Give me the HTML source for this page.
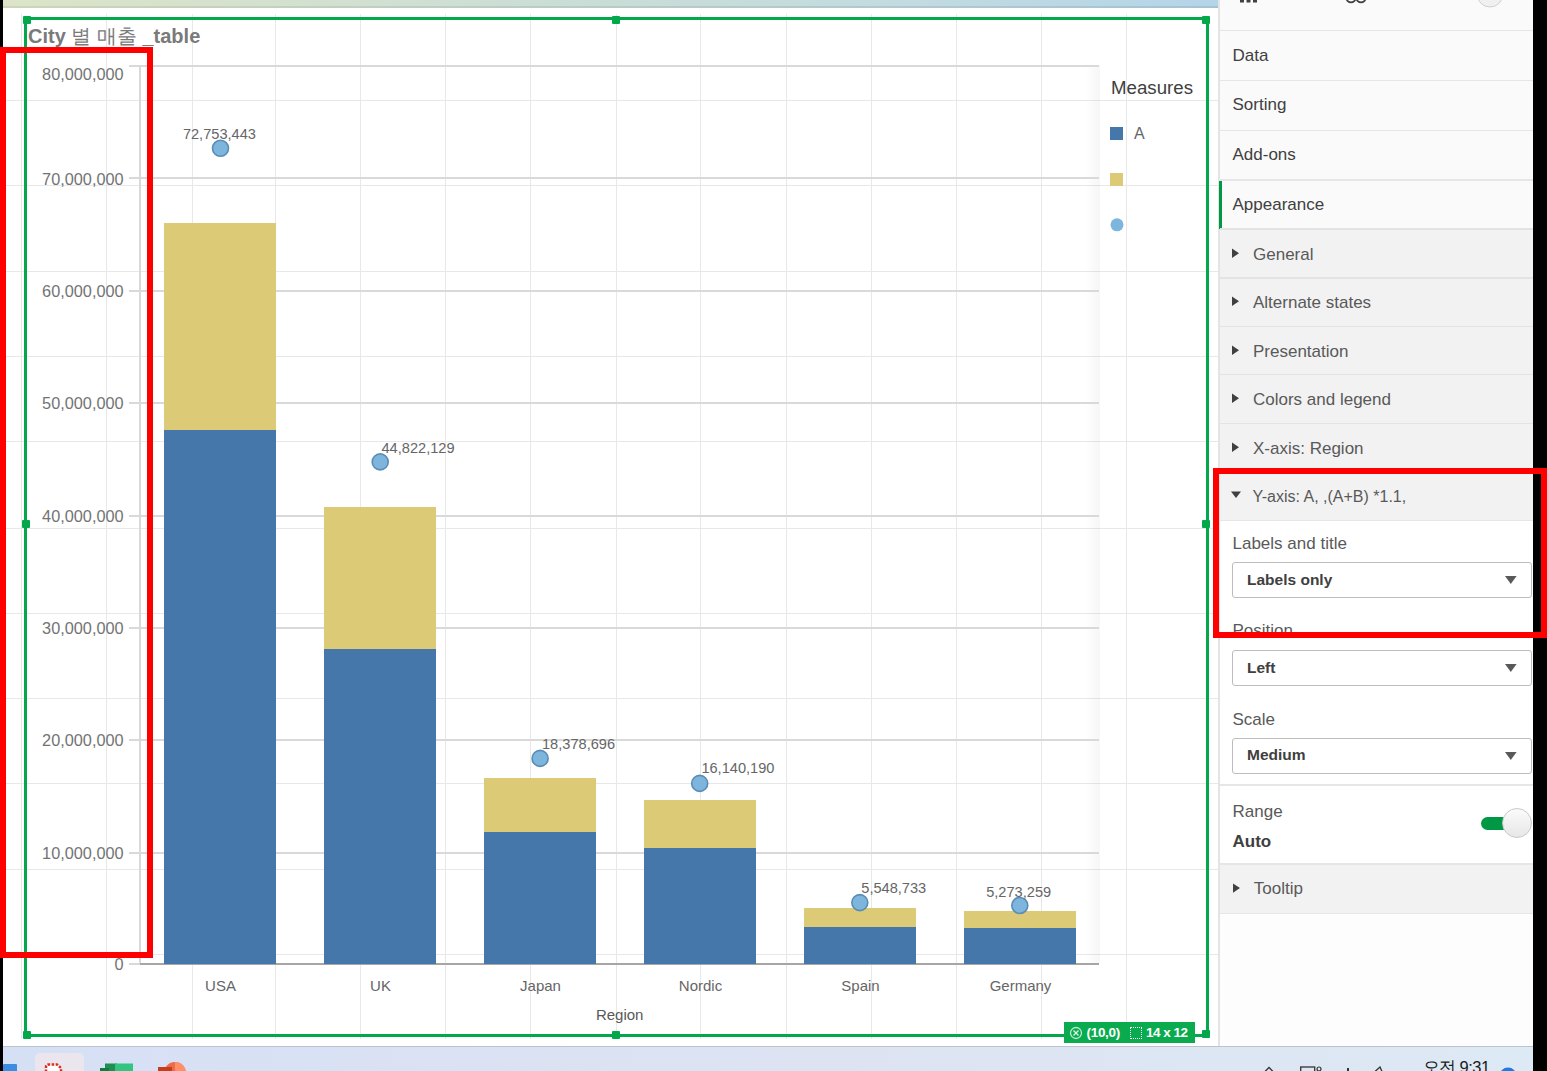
<!DOCTYPE html>
<html><head><meta charset="utf-8"><title>Qlik chart</title>
<style>
html,body{margin:0;padding:0;}
body{width:1547px;height:1071px;position:relative;overflow:hidden;background:#ffffff;font-family:'Liberation Sans',sans-serif;}
.r{position:absolute;box-sizing:content-box;}
.t{position:absolute;white-space:nowrap;line-height:0;font-family:'Liberation Sans',sans-serif;}
</style></head><body>
<div class="r" style="left:21.00px;top:14.00px;width:1.00px;height:1025.00px;background:#e8e8e8;"></div>
<div class="r" style="left:106.00px;top:14.00px;width:1.00px;height:1025.00px;background:#e8e8e8;"></div>
<div class="r" style="left:192.00px;top:14.00px;width:1.00px;height:1025.00px;background:#e8e8e8;"></div>
<div class="r" style="left:275.00px;top:14.00px;width:1.00px;height:1025.00px;background:#e8e8e8;"></div>
<div class="r" style="left:360.00px;top:14.00px;width:1.00px;height:1025.00px;background:#e8e8e8;"></div>
<div class="r" style="left:445.00px;top:14.00px;width:1.00px;height:1025.00px;background:#e8e8e8;"></div>
<div class="r" style="left:530.00px;top:14.00px;width:1.00px;height:1025.00px;background:#e8e8e8;"></div>
<div class="r" style="left:616.00px;top:14.00px;width:1.00px;height:1025.00px;background:#e8e8e8;"></div>
<div class="r" style="left:700.00px;top:14.00px;width:1.00px;height:1025.00px;background:#e8e8e8;"></div>
<div class="r" style="left:786.00px;top:14.00px;width:1.00px;height:1025.00px;background:#e8e8e8;"></div>
<div class="r" style="left:871.00px;top:14.00px;width:1.00px;height:1025.00px;background:#e8e8e8;"></div>
<div class="r" style="left:956.00px;top:14.00px;width:1.00px;height:1025.00px;background:#e8e8e8;"></div>
<div class="r" style="left:1041.00px;top:14.00px;width:1.00px;height:1025.00px;background:#e8e8e8;"></div>
<div class="r" style="left:1126.00px;top:14.00px;width:1.00px;height:1025.00px;background:#e8e8e8;"></div>
<div class="r" style="left:3.00px;top:100.00px;width:1215.00px;height:1.00px;background:#e8e8e8;"></div>
<div class="r" style="left:3.00px;top:185.00px;width:1215.00px;height:1.00px;background:#e8e8e8;"></div>
<div class="r" style="left:3.00px;top:271.00px;width:1215.00px;height:1.00px;background:#e8e8e8;"></div>
<div class="r" style="left:3.00px;top:356.00px;width:1215.00px;height:1.00px;background:#e8e8e8;"></div>
<div class="r" style="left:3.00px;top:441.00px;width:1215.00px;height:1.00px;background:#e8e8e8;"></div>
<div class="r" style="left:3.00px;top:528.00px;width:1215.00px;height:1.00px;background:#e8e8e8;"></div>
<div class="r" style="left:3.00px;top:613.00px;width:1215.00px;height:1.00px;background:#e8e8e8;"></div>
<div class="r" style="left:3.00px;top:698.00px;width:1215.00px;height:1.00px;background:#e8e8e8;"></div>
<div class="r" style="left:3.00px;top:783.00px;width:1215.00px;height:1.00px;background:#e8e8e8;"></div>
<div class="r" style="left:3.00px;top:869.00px;width:1215.00px;height:1.00px;background:#e8e8e8;"></div>
<div class="r" style="left:3.00px;top:954.00px;width:1215.00px;height:1.00px;background:#e8e8e8;"></div>
<div class="r" style="left:1085.00px;top:66.00px;width:15.00px;height:898.00px;background:linear-gradient(to right, rgba(0,0,0,0), rgba(0,0,0,0.035));"></div>
<div class="r" style="left:3px;top:0;width:1215px;height:6px;background:linear-gradient(to right,#dce4c8 0%,#c9ddd7 50%,#c3dbe0 74%,#b4d4e8 100%)"></div>
<div class="r" style="left:3px;top:6px;width:1215px;height:1.5px;background:linear-gradient(to right,#cbd5b8 0%,#b7cbc6 50%,#b0c9cf 74%,#a6c2d6 100%)"></div>
<div class="r" style="left:129.00px;top:65.10px;width:970.00px;height:2.00px;background:#d9d9d9;"></div>
<div class="r" style="left:129.00px;top:177.47px;width:970.00px;height:2.00px;background:#d9d9d9;"></div>
<div class="r" style="left:129.00px;top:289.84px;width:970.00px;height:2.00px;background:#d9d9d9;"></div>
<div class="r" style="left:129.00px;top:402.21px;width:970.00px;height:2.00px;background:#d9d9d9;"></div>
<div class="r" style="left:129.00px;top:514.58px;width:970.00px;height:2.00px;background:#d9d9d9;"></div>
<div class="r" style="left:129.00px;top:626.95px;width:970.00px;height:2.00px;background:#d9d9d9;"></div>
<div class="r" style="left:129.00px;top:739.32px;width:970.00px;height:2.00px;background:#d9d9d9;"></div>
<div class="r" style="left:129.00px;top:851.69px;width:970.00px;height:2.00px;background:#d9d9d9;"></div>
<div class="r" style="left:139.25px;top:66.00px;width:1.50px;height:898.00px;background:#d9d9d9;"></div>
<div class="r" style="left:129.00px;top:963.25px;width:11.00px;height:1.50px;background:#d9d9d9;"></div>
<div class="r" style="left:140.00px;top:963.25px;width:959.00px;height:1.50px;background:#a6a6a6;"></div>
<div class="t" style="right:1423.40px;top:74.05px;font-size:16.3px;color:#737373;font-weight:normal;font-family:'Liberation Sans', sans-serif;">80,000,000</div>
<div class="t" style="right:1423.40px;top:178.62px;font-size:16.3px;color:#737373;font-weight:normal;font-family:'Liberation Sans', sans-serif;">70,000,000</div>
<div class="t" style="right:1423.40px;top:290.99px;font-size:16.3px;color:#737373;font-weight:normal;font-family:'Liberation Sans', sans-serif;">60,000,000</div>
<div class="t" style="right:1423.40px;top:403.36px;font-size:16.3px;color:#737373;font-weight:normal;font-family:'Liberation Sans', sans-serif;">50,000,000</div>
<div class="t" style="right:1423.40px;top:515.73px;font-size:16.3px;color:#737373;font-weight:normal;font-family:'Liberation Sans', sans-serif;">40,000,000</div>
<div class="t" style="right:1423.40px;top:628.10px;font-size:16.3px;color:#737373;font-weight:normal;font-family:'Liberation Sans', sans-serif;">30,000,000</div>
<div class="t" style="right:1423.40px;top:740.47px;font-size:16.3px;color:#737373;font-weight:normal;font-family:'Liberation Sans', sans-serif;">20,000,000</div>
<div class="t" style="right:1423.40px;top:852.84px;font-size:16.3px;color:#737373;font-weight:normal;font-family:'Liberation Sans', sans-serif;">10,000,000</div>
<div class="t" style="right:1423.40px;top:964.35px;font-size:16.3px;color:#737373;font-weight:normal;font-family:'Liberation Sans', sans-serif;">0</div>
<div class="r" style="left:164.00px;top:222.50px;width:112.00px;height:207.00px;background:#dcca77;"></div>
<div class="r" style="left:164.00px;top:429.50px;width:112.00px;height:534.90px;background:#4577aa;"></div>
<div class="r" style="left:324.00px;top:507.40px;width:112.00px;height:141.60px;background:#dcca77;"></div>
<div class="r" style="left:324.00px;top:649.00px;width:112.00px;height:315.40px;background:#4577aa;"></div>
<div class="r" style="left:484.00px;top:777.60px;width:112.00px;height:54.50px;background:#dcca77;"></div>
<div class="r" style="left:484.00px;top:832.10px;width:112.00px;height:132.30px;background:#4577aa;"></div>
<div class="r" style="left:644.00px;top:800.40px;width:112.00px;height:48.00px;background:#dcca77;"></div>
<div class="r" style="left:644.00px;top:848.40px;width:112.00px;height:116.00px;background:#4577aa;"></div>
<div class="r" style="left:804.00px;top:908.40px;width:112.00px;height:18.20px;background:#dcca77;"></div>
<div class="r" style="left:804.00px;top:926.60px;width:112.00px;height:37.80px;background:#4577aa;"></div>
<div class="r" style="left:964.00px;top:911.10px;width:112.00px;height:16.70px;background:#dcca77;"></div>
<div class="r" style="left:964.00px;top:927.80px;width:112.00px;height:36.60px;background:#4577aa;"></div>
<div class="t" style="left:-79.50px;width:600px;text-align:center;top:986.10px;font-size:15px;color:#666666;font-weight:normal;font-family:'Liberation Sans', sans-serif;">USA</div>
<div class="t" style="left:80.50px;width:600px;text-align:center;top:986.10px;font-size:15px;color:#666666;font-weight:normal;font-family:'Liberation Sans', sans-serif;">UK</div>
<div class="t" style="left:240.50px;width:600px;text-align:center;top:986.10px;font-size:15px;color:#666666;font-weight:normal;font-family:'Liberation Sans', sans-serif;">Japan</div>
<div class="t" style="left:400.50px;width:600px;text-align:center;top:986.10px;font-size:15px;color:#666666;font-weight:normal;font-family:'Liberation Sans', sans-serif;">Nordic</div>
<div class="t" style="left:560.50px;width:600px;text-align:center;top:986.10px;font-size:15px;color:#666666;font-weight:normal;font-family:'Liberation Sans', sans-serif;">Spain</div>
<div class="t" style="left:720.50px;width:600px;text-align:center;top:986.10px;font-size:15px;color:#666666;font-weight:normal;font-family:'Liberation Sans', sans-serif;">Germany</div>
<div class="t" style="left:319.70px;width:600px;text-align:center;top:1014.80px;font-size:15px;color:#595959;font-weight:normal;font-family:'Liberation Sans', sans-serif;">Region</div>
<svg class="r" style="left:0;top:0" width="1547" height="1071"><circle cx="220.5" cy="148.3" r="8" fill="#7db5dc" stroke="#5a8cb5" stroke-width="1.6"/><circle cx="380.2" cy="461.9" r="8" fill="#7db5dc" stroke="#5a8cb5" stroke-width="1.6"/><circle cx="540.1" cy="758.4" r="8" fill="#7db5dc" stroke="#5a8cb5" stroke-width="1.6"/><circle cx="699.7" cy="783.4" r="8" fill="#7db5dc" stroke="#5a8cb5" stroke-width="1.6"/><circle cx="859.8" cy="902.6" r="8" fill="#7db5dc" stroke="#5a8cb5" stroke-width="1.6"/><circle cx="1019.8" cy="905.5" r="8" fill="#7db5dc" stroke="#5a8cb5" stroke-width="1.6"/></svg>
<div class="t" style="left:182.90px;top:133.74px;font-size:14.6px;color:#666666;font-weight:normal;font-family:'Liberation Sans', sans-serif;">72,753,443</div>
<div class="t" style="left:381.50px;top:448.04px;font-size:14.6px;color:#666666;font-weight:normal;font-family:'Liberation Sans', sans-serif;">44,822,129</div>
<div class="t" style="left:542.00px;top:743.64px;font-size:14.6px;color:#666666;font-weight:normal;font-family:'Liberation Sans', sans-serif;">18,378,696</div>
<div class="t" style="left:701.40px;top:768.24px;font-size:14.6px;color:#666666;font-weight:normal;font-family:'Liberation Sans', sans-serif;">16,140,190</div>
<div class="t" style="left:861.30px;top:887.84px;font-size:14.6px;color:#666666;font-weight:normal;font-family:'Liberation Sans', sans-serif;">5,548,733</div>
<div class="t" style="left:986.20px;top:891.54px;font-size:14.6px;color:#666666;font-weight:normal;font-family:'Liberation Sans', sans-serif;">5,273,259</div>
<div class="t" style="left:1111.00px;top:87.82px;font-size:18.7px;color:#404040;font-weight:normal;font-family:'Liberation Sans', sans-serif;">Measures</div>
<div class="r" style="left:1110.30px;top:126.50px;width:13.00px;height:13.00px;background:#4577aa;"></div>
<div class="t" style="left:1134.00px;top:134.46px;font-size:16px;color:#666666;font-weight:normal;font-family:'Liberation Sans', sans-serif;">A</div>
<div class="r" style="left:1110.30px;top:172.50px;width:13.00px;height:13.00px;background:#dcca77;"></div>
<svg class="r" style="left:1108px;top:216px" width="18" height="18"><circle cx="9" cy="8.8" r="6.5" fill="#7db5dc"/></svg>
<div class="t" style="left:28.00px;top:36.37px;font-size:20px;color:#7a7a7a;font-weight:bold;font-family:'Liberation Sans', sans-serif;">City <span style="font-weight:500">별 매출</span> _table</div>
<div class="r" style="left:24.00px;top:17.00px;width:1184.50px;height:3.00px;background:#03a84a;"></div>
<div class="r" style="left:24.00px;top:1034.00px;width:1184.50px;height:3.00px;background:#03a84a;"></div>
<div class="r" style="left:24.00px;top:17.00px;width:3.00px;height:1020.00px;background:#03a84a;"></div>
<div class="r" style="left:1205.50px;top:17.00px;width:3.00px;height:1020.00px;background:#03a84a;"></div>
<div class="r" style="left:22.50px;top:15.70px;width:8.00px;height:8.00px;background:#03a84a;border-radius:1px"></div>
<div class="r" style="left:611.50px;top:15.50px;width:8.00px;height:8.00px;background:#03a84a;border-radius:1px"></div>
<div class="r" style="left:1202.00px;top:16.00px;width:8.00px;height:8.00px;background:#03a84a;border-radius:1px"></div>
<div class="r" style="left:22.40px;top:519.70px;width:8.00px;height:8.00px;background:#03a84a;border-radius:1px"></div>
<div class="r" style="left:1202.00px;top:519.70px;width:8.00px;height:8.00px;background:#03a84a;border-radius:1px"></div>
<div class="r" style="left:22.70px;top:1030.50px;width:8.00px;height:8.00px;background:#03a84a;border-radius:1px"></div>
<div class="r" style="left:611.50px;top:1030.50px;width:8.00px;height:8.00px;background:#03a84a;border-radius:1px"></div>
<div class="r" style="left:1202.00px;top:1030.30px;width:8.00px;height:8.00px;background:#03a84a;border-radius:1px"></div>
<div class="r" style="left:1064.30px;top:1022.40px;width:130.70px;height:20.70px;background:#0aab4f;"></div>
<svg class="r" style="left:1069px;top:1026px" width="15" height="15"><circle cx="7" cy="7" r="5.5" fill="none" stroke="#bfe8cc" stroke-width="1.3"/><path d="M4.5 4.5 L9.5 9.5 M9.5 4.5 L4.5 9.5" stroke="#dff5e6" stroke-width="1.3"/></svg>
<div class="t" style="left:1086.50px;top:1033.32px;font-size:13.5px;color:#ffffff;font-weight:bold;font-family:'Liberation Sans', sans-serif;letter-spacing:-0.3px">(10,0)</div>
<div class="r" style="left:1130px;top:1027px;width:10px;height:10px;border:1.5px dotted #ffffff"></div>
<div class="t" style="left:1146.00px;top:1033.32px;font-size:13.5px;color:#ffffff;font-weight:bold;font-family:'Liberation Sans', sans-serif;letter-spacing:-0.5px">14 x 12</div>
<div class="r" style="left:1218.00px;top:0.00px;width:315.00px;height:1046.00px;background:#fafafa;"></div>
<div class="r" style="left:1218.00px;top:0.00px;width:1.50px;height:1046.00px;background:#e4e4e4;"></div>
<svg class="r" style="left:1238.8px;top:0" width="20" height="4"><rect x="1" y="0" width="4" height="2.5" fill="#404040"/><rect x="7.5" y="0" width="4" height="2.5" fill="#404040"/><rect x="14" y="0" width="4" height="2.5" fill="#404040"/></svg>
<svg class="r" style="left:1345px;top:0" width="24" height="4"><ellipse cx="6" cy="-2" rx="4.5" ry="4.3" fill="none" stroke="#404040" stroke-width="1.8"/><ellipse cx="16" cy="-2" rx="4.5" ry="4.3" fill="none" stroke="#404040" stroke-width="1.8"/></svg>
<svg class="r" style="left:1470px;top:0" width="40" height="12"><circle cx="20" cy="-6" r="13" fill="#f0f0f0" stroke="#d0d0d0" stroke-width="1"/></svg>
<div class="r" style="left:1219.50px;top:29.85px;width:313.50px;height:1.50px;background:#e6e6e6;"></div>
<div class="r" style="left:1219.50px;top:79.75px;width:313.50px;height:1.50px;background:#e6e6e6;"></div>
<div class="r" style="left:1219.50px;top:129.55px;width:313.50px;height:1.50px;background:#e6e6e6;"></div>
<div class="r" style="left:1219.50px;top:179.25px;width:313.50px;height:1.50px;background:#e6e6e6;"></div>
<div class="t" style="left:1232.50px;top:55.86px;font-size:17px;color:#404040;font-weight:normal;font-family:'Liberation Sans', sans-serif;">Data</div>
<div class="t" style="left:1232.50px;top:105.41px;font-size:17px;color:#404040;font-weight:normal;font-family:'Liberation Sans', sans-serif;">Sorting</div>
<div class="t" style="left:1232.50px;top:155.01px;font-size:17px;color:#404040;font-weight:normal;font-family:'Liberation Sans', sans-serif;">Add-ons</div>
<div class="t" style="left:1232.50px;top:204.81px;font-size:17px;color:#404040;font-weight:normal;font-family:'Liberation Sans', sans-serif;">Appearance</div>
<div class="r" style="left:1219.00px;top:180.50px;width:2.50px;height:48.50px;background:#009845;"></div>
<div class="r" style="left:1219.50px;top:229.20px;width:313.50px;height:816.80px;background:#f2f2f2;"></div>
<div class="r" style="left:1219.50px;top:228.45px;width:313.50px;height:1.50px;background:#e3e3e3;"></div>
<div class="r" style="left:1219.50px;top:277.05px;width:313.50px;height:1.50px;background:#e3e3e3;"></div>
<div class="r" style="left:1219.50px;top:325.65px;width:313.50px;height:1.50px;background:#e3e3e3;"></div>
<div class="r" style="left:1219.50px;top:373.95px;width:313.50px;height:1.50px;background:#e3e3e3;"></div>
<div class="r" style="left:1219.50px;top:422.55px;width:313.50px;height:1.50px;background:#e3e3e3;"></div>
<div class="r" style="left:1219.50px;top:471.25px;width:313.50px;height:1.50px;background:#e3e3e3;"></div>
<div class="t" style="left:1253.00px;top:254.81px;font-size:17px;color:#595959;font-weight:normal;font-family:'Liberation Sans', sans-serif;">General</div>
<svg class="r" style="left:1232px;top:247.70px" width="8" height="11"><path d="M0 0.5 L7 5.2 L0 10 Z" fill="#404040"/></svg>
<div class="t" style="left:1253.00px;top:303.41px;font-size:17px;color:#595959;font-weight:normal;font-family:'Liberation Sans', sans-serif;">Alternate states</div>
<svg class="r" style="left:1232px;top:296.30px" width="8" height="11"><path d="M0 0.5 L7 5.2 L0 10 Z" fill="#404040"/></svg>
<div class="t" style="left:1253.00px;top:352.01px;font-size:17px;color:#595959;font-weight:normal;font-family:'Liberation Sans', sans-serif;">Presentation</div>
<svg class="r" style="left:1232px;top:344.90px" width="8" height="11"><path d="M0 0.5 L7 5.2 L0 10 Z" fill="#404040"/></svg>
<div class="t" style="left:1253.00px;top:400.31px;font-size:17px;color:#595959;font-weight:normal;font-family:'Liberation Sans', sans-serif;">Colors and legend</div>
<svg class="r" style="left:1232px;top:393.20px" width="8" height="11"><path d="M0 0.5 L7 5.2 L0 10 Z" fill="#404040"/></svg>
<div class="t" style="left:1253.00px;top:448.91px;font-size:17px;color:#595959;font-weight:normal;font-family:'Liberation Sans', sans-serif;">X-axis: Region</div>
<svg class="r" style="left:1232px;top:441.80px" width="8" height="11"><path d="M0 0.5 L7 5.2 L0 10 Z" fill="#404040"/></svg>
<div class="t" style="left:1252.50px;top:496.96px;font-size:16px;color:#595959;font-weight:normal;font-family:'Liberation Sans', sans-serif;">Y-axis: A, ,(A+B) *1.1,</div>
<svg class="r" style="left:1231px;top:491px" width="11" height="8"><path d="M0 0.5 L10 0.5 L5 7 Z" fill="#404040"/></svg>
<div class="r" style="left:1219.50px;top:520.70px;width:313.50px;height:343.00px;background:#ffffff;"></div>
<div class="r" style="left:1219.50px;top:519.50px;width:313.50px;height:1.50px;background:#e6e6e6;"></div>
<div class="t" style="left:1232.50px;top:543.71px;font-size:17px;color:#595959;font-weight:normal;font-family:'Liberation Sans', sans-serif;">Labels and title</div>
<div class="r" style="left:1232px;top:562px;width:297.5px;height:34px;border:1.5px solid #bdbdbd;border-radius:3px;background:#fff"></div>
<div class="t" style="left:1247.00px;top:579.83px;font-size:15.5px;color:#404040;font-weight:bold;font-family:'Liberation Sans', sans-serif;">Labels only</div>
<svg class="r" style="left:1505px;top:576px" width="12" height="9"><path d="M0 0 L11.6 0 L5.8 8 Z" fill="#595959"/></svg>
<div class="t" style="left:1232.50px;top:631.11px;font-size:17px;color:#595959;font-weight:normal;font-family:'Liberation Sans', sans-serif;">Position</div>
<div class="r" style="left:1232px;top:650px;width:297.5px;height:34px;border:1.5px solid #bdbdbd;border-radius:3px;background:#fff"></div>
<div class="t" style="left:1247.00px;top:667.83px;font-size:15.5px;color:#404040;font-weight:bold;font-family:'Liberation Sans', sans-serif;">Left</div>
<svg class="r" style="left:1505px;top:664px" width="12" height="9"><path d="M0 0 L11.6 0 L5.8 8 Z" fill="#595959"/></svg>
<div class="t" style="left:1232.50px;top:719.51px;font-size:17px;color:#595959;font-weight:normal;font-family:'Liberation Sans', sans-serif;">Scale</div>
<div class="r" style="left:1232px;top:737.6px;width:297.5px;height:34px;border:1.5px solid #bdbdbd;border-radius:3px;background:#fff"></div>
<div class="t" style="left:1247.00px;top:755.43px;font-size:15.5px;color:#404040;font-weight:bold;font-family:'Liberation Sans', sans-serif;">Medium</div>
<svg class="r" style="left:1505px;top:751.6px" width="12" height="9"><path d="M0 0 L11.6 0 L5.8 8 Z" fill="#595959"/></svg>
<div class="r" style="left:1219.50px;top:784.00px;width:313.50px;height:1.50px;background:#e6e6e6;"></div>
<div class="t" style="left:1232.50px;top:812.11px;font-size:17px;color:#595959;font-weight:normal;font-family:'Liberation Sans', sans-serif;">Range</div>
<div class="t" style="left:1232.50px;top:842.11px;font-size:17px;color:#404040;font-weight:bold;font-family:'Liberation Sans', sans-serif;">Auto</div>
<div class="r" style="left:1480.5px;top:816.9px;width:36px;height:13.5px;border-radius:7px;background:#009845"></div>
<div class="r" style="left:1502px;top:808.2px;width:28px;height:28px;border-radius:50%;background:linear-gradient(#fbfbfb,#e7e7e7);border:1.5px solid #c9c9c9"></div>
<div class="r" style="left:1219.50px;top:863.50px;width:313.50px;height:49.50px;background:#f2f2f2;"></div>
<div class="r" style="left:1219.50px;top:863.00px;width:313.50px;height:1.50px;background:#e6e6e6;"></div>
<div class="r" style="left:1219.50px;top:912.50px;width:313.50px;height:1.50px;background:#e6e6e6;"></div>
<div class="t" style="left:1253.80px;top:888.61px;font-size:17px;color:#595959;font-weight:normal;font-family:'Liberation Sans', sans-serif;">Tooltip</div>
<svg class="r" style="left:1232.5px;top:883px" width="8" height="11"><path d="M0 0.5 L7 5 L0 9.8 Z" fill="#404040"/></svg>
<div class="r" style="left:1219.50px;top:914.00px;width:313.50px;height:132.00px;background:#fdfdfd;"></div>
<div class="r" style="left:0.00px;top:0.00px;width:3.00px;height:47.00px;background:#000;"></div>
<div class="r" style="left:0.00px;top:958.00px;width:3.00px;height:113.00px;background:#000;"></div>
<div class="r" style="left:1533.00px;top:0.00px;width:14.00px;height:1071.00px;background:#000;"></div>
<div class="r" style="left:0;top:47px;width:141px;height:899px;border:6px solid #ff0000"></div>
<div class="r" style="left:1213px;top:468px;width:322px;height:157.5px;border:6px solid #ff0000"></div>
<div class="r" style="left:3px;top:1046px;width:1530px;height:25px;background:linear-gradient(to right,#d6e0f5 0%,#dde3f1 55%,#dde9f5 100%)"></div>
<div class="r" style="left:3.00px;top:1046.00px;width:1530.00px;height:1.00px;background:#bcc3cf;"></div>
<div class="r" style="left:3px;top:1063.5px;width:14px;height:8px;background:#3a8de0;border-radius:1px"></div>
<div class="r" style="left:34.5px;top:1052.5px;width:49.5px;height:25px;background:#ebe6ee;border-radius:5px"></div>
<svg class="r" style="left:44px;top:1062px" width="20" height="10"><path d="M2 10 L2 5 Q2 2.5 5 2.5 L13 2.5 L17 6 L17 10" fill="#fff" stroke="#e02a1c" stroke-width="2.5" stroke-dasharray="2.5 1.5"/></svg>
<svg class="r" style="left:100px;top:1062px" width="34" height="10"><rect x="5" y="1.5" width="12" height="9" fill="#1d8f4e"/><rect x="15" y="1.5" width="18" height="9" fill="#33c481"/><rect x="0" y="6" width="9" height="5" fill="#107c41"/></svg>
<svg class="r" style="left:158px;top:1061px" width="32" height="10"><circle cx="17" cy="12" r="11" fill="#ed6c47"/><path d="M17 1 A11 11 0 0 1 28 12 L17 12 Z" fill="#ff8f6b"/><rect x="0" y="6" width="14" height="5" fill="#c43e1c"/></svg>
<div class="t" style="left:1422.50px;top:1066.78px;font-size:16.5px;color:#1a1a1a;font-weight:normal;font-family:'Liberation Sans', sans-serif;letter-spacing:-0.5px">오전 9:31</div>
<svg class="r" style="left:1264px;top:1066px" width="10" height="6"><path d="M1 5.5 L5 1.5 L9 5.5" fill="none" stroke="#333" stroke-width="1.3"/></svg>
<svg class="r" style="left:1300px;top:1066px" width="24" height="6"><rect x="0.7" y="1" width="14" height="9" fill="none" stroke="#333" stroke-width="1.3"/><circle cx="19" cy="3" r="2" fill="none" stroke="#333" stroke-width="1.2"/></svg>
<svg class="r" style="left:1345px;top:1067px" width="8" height="5"><rect x="2" y="1" width="2" height="4" fill="#333"/></svg>
<svg class="r" style="left:1372px;top:1066px" width="14" height="6"><path d="M3 5.5 L8 1 L10 5.5" fill="none" stroke="#333" stroke-width="1.3"/></svg>
<svg class="r" style="left:1498px;top:1066px" width="20" height="6"><circle cx="10" cy="10" r="8.5" fill="#1e7be0"/></svg>
</body></html>
